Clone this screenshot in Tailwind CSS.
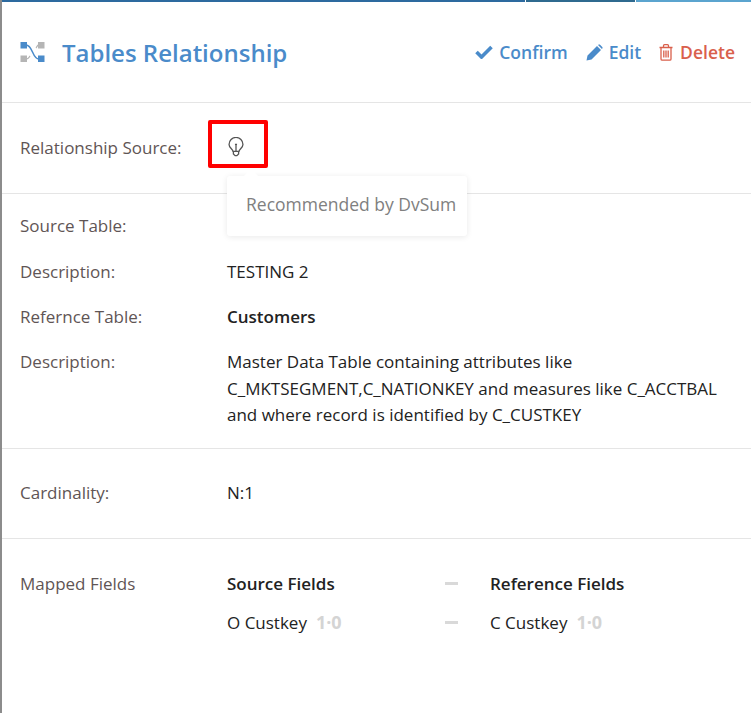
<!DOCTYPE html>
<html lang="en">
<head>
    <meta charset="utf-8" />
    <title>Tables Relationship</title>
    <script src="https://cdn.jsdelivr.net/npm/@tailwindcss/browser@4"></script>
</head>
<body class="bg-white overflow-hidden font-['Open_Sans',sans-serif] text-[17px] text-[#222]">
    <div class="relative h-[713px] w-[751px] border-l-2 border-[#8c8c8c]">
        <!-- Top strip -->
        <div class="flex h-[2px] gap-px">
            <div class="w-[523px] bg-[#2d6a9f]"></div>
            <div class="w-[109px] bg-[#2f6a8f]"></div>
            <div class="flex-1 bg-[#5ba4cf]"></div>
        </div>

        <!-- Header -->
        <header class="flex h-[101px] items-center justify-between border-b border-[#e5e5e5] pl-[18px] pr-[16px]">
            <div class="flex items-center gap-[16px]">
                <svg width="26" height="20" viewBox="0 0 26 20">
                    <path d="M6 17c3 0 3-2 4-3M16 6c1-1 1-3 3-3" fill="none" stroke="#b5b5b5" stroke-width="1.300" />
                    <path d="M6 3c7 0 6 14 13 14" fill="none" stroke="#4a8bca" stroke-width="1.500" />
                    <rect x="0.500" y="0" width="6.500" height="6.500" fill="#4a8bca" />
                    <rect x="18" y="0" width="6.500" height="6.500" fill="#b5b5b5" />
                    <rect x="0.500" y="13.500" width="6.500" height="6.500" fill="#b5b5b5" />
                    <rect x="18" y="13.500" width="6.500" height="6.500" fill="#4a8bca" />
                </svg>
                <h1 class="mt-[2px] text-[24px] font-semibold text-[#4a8bca]">Tables Relationship</h1>
            </div>
            <div class="flex items-center gap-[18px] text-[17.5px] font-semibold text-[#4a8bca]">
                <span class="flex items-center gap-[6px]">
                    <svg width="18" height="14" viewBox="0 0 18 14"><path d="M1.500 7l5 5 10-10" fill="none" stroke="#4a8bca" stroke-width="3.600" /></svg>
                    Confirm
                </span>
                <span class="flex items-center gap-[6px]">
                    <svg width="17" height="17" viewBox="0 0 17 17"><path d="M0.500 16.500l1-5L11 2l4 4-9.500 9.500zM12 1l.8-.5h1l2.700 2.700v1L15.900 5z" fill="#4a8bca" /></svg>
                    Edit
                </span>
                <span class="flex items-center gap-[7px] text-[#d9604c]">
                    <svg width="14" height="17" viewBox="0 0 14 17" fill="none" stroke="#d9604c" stroke-width="1.300"><path d="M.5 3.500h13M2 3.500v11.500a1.200 1.200 0 0 0 1.200 1.200h7.600A1.200 1.200 0 0 0 12 15V3.500M4.500 3.500V1.700A1 1 0 0 1 5.500 .7h3a1 1 0 0 1 1 1v1.800M4.800 6.500v7M7 6.500v7M9.200 6.500v7" /></svg>
                    Delete
                </span>
            </div>
        </header>

        <!-- Relationship source -->
        <section class="flex h-[91px] items-center border-b border-[#e5e5e5] pl-[18px]">
            <div class="w-[188px] text-[#5f5555]">Relationship Source:</div>
            <div class="-mt-[8px] flex h-[48px] w-[60px] items-center justify-center rounded-[2px] border-[4px] border-[#ff0000]">
                <svg class="mr-[4px] mt-[6px]" width="16" height="20" viewBox="0 0 18 23" fill="none" stroke="#555" stroke-width="1.500"><path d="M5.500 16.500c0-2.500-4.500-4-4.500-8a8 8 0 0 1 16 0c0 4-4.500 5.500-4.500 8zM6 16.500v3l2 2h2l2-2v-3M9 16V8M7.800 8.500h2.400" /></svg>
            </div>
        </section>

        <!-- Tables -->
        <section class="h-[255px] border-b border-[#e5e5e5] pl-[18px] pt-[18px]">
            <div class="flex h-[46px] items-start leading-[27px]">
                <div class="w-[207px] text-[#5f5555]">Source Table:</div>
            </div>
            <div class="flex h-[45px] items-start leading-[27px]">
                <div class="w-[207px] text-[#5f5555]">Description:</div>
                <div>TESTING 2</div>
            </div>
            <div class="flex h-[46px] items-start leading-[27px]">
                <div class="w-[207px] text-[#5f5555]">Refernce Table:</div>
                <div class="font-semibold">Customers</div>
            </div>
            <div class="flex items-start leading-[26.5px]">
                <div class="w-[207px] text-[#5f5555]">Description:</div>
                <div class="w-[510px]">Master Data Table containing attributes like C_MKTSEGMENT,C_NATIONKEY and measures like C_ACCTBAL and where record is identified by C_CUSTKEY</div>
            </div>
        </section>

        <!-- Cardinality -->
        <section class="flex h-[90px] items-center border-b border-[#e5e5e5] pb-[2px] pl-[18px]">
            <div class="w-[207px] text-[#5f5555]">Cardinality:</div>
            <div>N:1</div>
        </section>

        <!-- Mapped fields -->
        <section class="flex pl-[18px] pt-[31px] leading-[27px]">
            <div class="w-[207px] text-[#5f5555]">Mapped Fields</div>
            <div class="grid grid-cols-[218px_45px_auto] gap-y-[12px]">
                <div class="font-semibold">Source Fields</div>
                <div class="flex items-center"><div class="h-[3px] w-[13px] bg-[#d9d9d9]"></div></div>
                <div class="font-semibold">Reference Fields</div>
                <div class="flex items-center gap-[9px]">O Custkey <span class="text-[18px] font-bold text-[#d4d4d4]">1·0</span></div>
                <div class="flex items-center"><div class="h-[3px] w-[13px] bg-[#d9d9d9]"></div></div>
                <div class="flex items-center gap-[9px]">C Custkey <span class="text-[18px] font-bold text-[#d4d4d4]">1·0</span></div>
            </div>
        </section>

        <!-- Tooltip -->
        <div class="absolute left-[225px] top-[176px] flex h-[60px] w-[240px] items-center rounded-[3px] bg-white pb-[4px] pl-[19px] text-[17.5px] text-[#808080] shadow-[0_1px_6px_rgba(0,0,0,0.09)]">
            Recommended by DvSum
            <div class="absolute left-[19px] top-[-5px] size-[10px] rotate-45 bg-white"></div>
        </div>
    </div>
</body>
</html>
